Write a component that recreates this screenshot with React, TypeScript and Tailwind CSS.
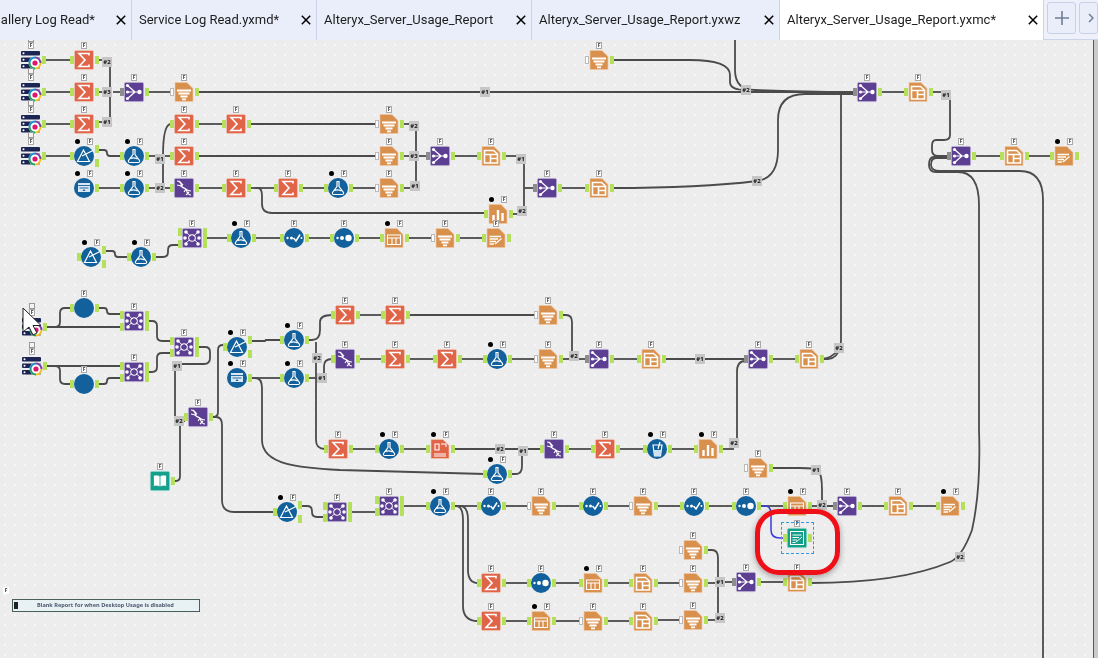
import React from "react";

type T = "server"|"sum"|"union"|"join"|"dna"|"text"|"layout"|"table"|"chart"|"render"|"flask"|"filter"|"dial"|"dots"|"blank"|"input"|"cup"|"tool"|"teal"|"book";

const BLUE = "#12609c";
const OR = "#d9904c";

function Icon({ t }: { t: T }) {
  const w = { stroke: "#fff", fill: "none", strokeWidth: 1.4 } as const;
  const fileShape = <path d="M1 0.5H13L19 6.5V19.5H1Z" fill={t === "tool" ? "#df6448" : OR} stroke="#eec9a6" strokeWidth="0.7" />;
  const circle = <circle cx="10" cy="10" r="10" fill={BLUE} />;
  const square = (c: string, e: string) => <rect x="0.4" y="0.4" width="19.2" height="19.2" rx="1.5" fill={c} stroke={e} strokeWidth="0.8" />;
  switch (t) {
    case "server":
      return (<>
        <rect x="0" y="1" width="19" height="4.6" rx="1" fill="#1b2453" />
        <rect x="0" y="7.5" width="19" height="4.6" rx="1" fill="#1b2453" />
        <rect x="0" y="14" width="19" height="4.6" rx="1" fill="#1b2453" />
        <circle cx="2.5" cy="3.3" r="1" fill="#fff" /><circle cx="2.5" cy="9.8" r="1" fill="#fff" /><circle cx="2.5" cy="16.3" r="1" fill="#fff" />
        <circle cx="14" cy="13" r="6.5" fill="#fff" />
        <path d="M8.5 13A5.5 5.5 0 0 1 14 7.5" stroke="#1b8fc4" strokeWidth="2" fill="none" />
        <path d="M14 7.5A5.5 5.5 0 0 1 19.5 13" stroke="#7a3fa0" strokeWidth="2" fill="none" />
        <path d="M19.5 13A5.5 5.5 0 0 1 14 18.5" stroke="#f0c020" strokeWidth="2" fill="none" />
        <path d="M14 18.5A5.5 5.5 0 0 1 8.5 13" stroke="#20a060" strokeWidth="2" fill="none" />
        <circle cx="14" cy="13" r="2.6" fill="#e0156b" />
      </>);
    case "sum":
      return (<>{square("#df6448", "#efcabd")}<path d="M15 5.5V3.5H5L11 10L5 16.5H15V14.5" {...w} strokeWidth="1.6" /></>);
    case "union":
      return (<>{square("#5c3f92", "#b9aed4")}
        <path d="M3.5 3.5L11 10M3.5 10H15M3.5 16.5L11 10" {...w} strokeWidth="1.2" />
        <circle cx="3.5" cy="3.5" r="1.6" fill="#fff" /><circle cx="3.5" cy="10" r="1.6" fill="#fff" /><circle cx="3.5" cy="16.5" r="1.6" fill="#fff" /><circle cx="15.5" cy="10" r="2.2" fill="#fff" /></>);
    case "join":
      return (<>{square("#5c3f92", "#b9aed4")}
        <circle cx="10" cy="10" r="3.2" {...w} strokeWidth="1.2" />
        <path d="M4 4L17 16M16 4L3 16" {...w} strokeWidth="0.9" />
        <circle cx="10" cy="10" r="2.6" fill="#5c3f92" />
        <circle cx="4" cy="4" r="1.8" fill="#fff" /><circle cx="16" cy="4" r="1.8" fill="#fff" /><circle cx="3" cy="10" r="1.8" fill="#fff" /><circle cx="17" cy="10" r="1.8" fill="#fff" /><circle cx="4" cy="16" r="1.8" fill="#fff" /><circle cx="16" cy="16" r="1.8" fill="#fff" /></>);
    case "dna":
      return (<>{square("#5c3f92", "#b9aed4")}
        <path d="M3 3C9 3 6 10 10 10C14 10 11 17 17 17M3 7C9 7 11 13 17 13M5 3L8 6M9 6L7 9M12 11L10 14M15 14L12 17" {...w} strokeWidth="1.1" /></>);
    case "text":
      return (<>{fileShape}<path d="M3 8.5H17M4.5 11.5H15.5M6.5 14.5H13.5M8 17.3H12" {...w} strokeWidth="1.8" /></>);
    case "layout":
      return (<>{fileShape}<path d="M3.5 4.5H12.5L16.5 8V17H3.5ZM3.5 8.5H16.5M9.5 8.5V17M9.5 12.5H16.5" {...w} strokeWidth="1.6" /></>);
    case "table":
      return (<>{fileShape}<path d="M3.5 7H16.5V16.5H3.5ZM3.5 10H16.5M8 10V16.5M12 10V16.5" {...w} strokeWidth="1.1" /></>);
    case "chart":
      return (<>{fileShape}<path d="M5.5 17V11M10 17V6M14.5 17V9" {...w} strokeWidth="2.4" /></>);
    case "render":
      return (<>{fileShape}<path d="M3.5 8.5H15M3.5 11H12M3.5 13.5H10M3.5 16H8M9 16L15.5 10.5" {...w} strokeWidth="1.3" /></>);
    case "tool":
      return (<>{fileShape}<path d="M5 5H9V11H5ZM11 5H16V8M4 15H16M4 17H16" {...w} strokeWidth="1.1" /></>);
    case "flask":
      return (<>{circle}<path d="M8.5 3.5H11.5M9 3.5V8.5L4.5 14.5Q4 16.5 6 16.5H14Q16 16.5 15.5 14.5L11 8.5V3.5M6.5 12.5Q10 11 13.5 13" {...w} strokeWidth="1.2" /></>);
    case "filter":
      return (<>{circle}<path d="M9.5 4L3.5 15.5H15.5ZM8 10L19 4.5" {...w} strokeWidth="1.2" /></>);
    case "dial":
      return (<>{circle}<circle cx="3.5" cy="10" r="1.2" fill="#fff" /><circle cx="7.5" cy="10" r="1.5" fill="#fff" /><path d="M9.5 10L12 13L16 6.5" {...w} strokeWidth="1.5" /><circle cx="17.5" cy="10" r="1" fill="#fff" /></>);
    case "dots":
      return (<>{circle}<circle cx="3.5" cy="10" r="1.2" fill="#fff" /><circle cx="8" cy="10" r="2" fill="#fff" /><circle cx="14.5" cy="10" r="3.2" fill="#fff" /></>);
    case "blank":
      return circle;
    case "input":
      return (<>{circle}<path d="M4 5H16V14H4Z" fill="#dbe7f3" /><path d="M4 7.5H16M5.5 10H14.5" stroke={BLUE} strokeWidth="0.9" /><path d="M10 11L8.5 13H11.5Z" fill={BLUE} /></>);
    case "cup":
      return (<>{circle}<path d="M6 6L7.5 17H13.5L15 6ZM13 3L11 10" {...w} strokeWidth="1.2" /><path d="M6.7 11H14.3L13.5 17H7.5Z" fill="#cfe2f2" /></>);
    case "teal":
      return (<>{square("#12a08a", "#7fcfc2")}<rect x="3.5" y="3.5" width="13" height="13" fill="none" stroke="#fff" strokeWidth="1" /><path d="M5.5 7H14.5M5.5 9.5H12M5.5 12H10M5.5 14.5H8M8.5 14.5L15 9" {...w} strokeWidth="1" /></>);
    case "book":
      return (<>{square("#15a08c", "#8ad3c8")}<path d="M10 5C8 3.8 5.5 3.8 3.5 4.5V15.5C5.5 14.8 8 14.8 10 16C12 14.8 14.5 14.8 16.5 15.5V4.5C14.5 3.8 12 3.8 10 5ZM10 5V16" fill="#fff" stroke="#15a08c" strokeWidth="0.8" /></>);
  }
}

// node: type, centre x, centre y, has black dot
type N = [T, number, number, number?];
const nodes: N[] = [
  ["server",31,60],["sum",84,60],["server",31,92],["sum",84,92],["union",134,92],["text",184,92],
  ["server",31,124],["sum",84,124],["sum",184,124],["sum",236,124],["text",389,124],
  ["server",31,156],["filter",84,156,1],["flask",134,156,1],["sum",184,156],["text",389,156],["union",440,156],["layout",491,156],
  ["input",84,188,1],["flask",134,188,1],["dna",184,188],["sum",236,188],["sum",288,188],["flask",338,188,1],["text",389,188],["union",547,188],["layout",599,188],
  ["chart",498,214,1],["text",599,60],["union",867,92],["layout",918,92],["union",961,156],["layout",1014,156],["render",1064,156,1],
  ["filter",91,257,1],["flask",141,257,1],["join",192,238],["flask",241,238,1],["dial",294,238],["dots",344,238],["table",394,238,1],["text",445,238],["render",496,238],
  ["server",32,327],["blank",84,308],["join",134,321],["join",184,347],["filter",237,347,1],["flask",294,340,1],["sum",345,315],["sum",395,315],["text",548,315],
  ["server",32,366],["join",134,372],["blank",84,384],["input",237,378,1],["flask",294,378,1],["dna",345,359],["sum",395,359],["sum",447,359],["flask",497,359,1],["text",548,359],["union",599,359],["layout",651,359],["union",758,359],["layout",809,359],
  ["dna",198,417],["sum",338,449],["flask",389,449,1],["tool",440,449,1],["dna",554,449],["sum",605,449],["cup",657,449,1],["chart",708,449,1],["flask",497,474,1],["text",758,468],
  ["book",160,481],
  ["filter",287,512,1],["join",337,512],["join",389,506],["flask",440,506,1],["dial",491,506],["text",541,506],["dial",593,506],["text",643,506],["dial",694,506],["dots",746,506],["table",797,506,1],["union",847,506],["layout",898,506],["render",950,506,1],
  ["teal",797,538],["text",693,550],
  ["sum",491,583],["dots",541,583],["table",593,583,1],["layout",643,583],["text",693,583],["union",746,582],["layout",797,582],
  ["sum",491,621],["table",541,621,1],["text",593,621],["layout",643,621],["text",693,620],
];

const tags: [number, number, string][] = [
  [107,62,"#2"],[107,92,"#3"],[107,122,"#1"],[160,159,"#1"],[160,188,"#2"],[414,126,"#2"],[414,156,"#3"],[415,186,"#1"],[521,159,"#1"],[522,211,"#2"],[485,92,"#1"],[746,90,"#2"],[757,181,"#2"],[946,95,"#1"],
  [177,366,"#1"],[179,421,"#2"],[317,358,"#2"],[322,378,"#1"],[574,356,"#2"],[700,359,"#1"],[839,348,"#2"],[500,449,"#2"],[523,451,"#1"],[734,443,"#2"],[816,470,"#1"],[822,505,"#2"],[720,582,"#1"],[720,618,"#2"],[960,557,"#2"],
];

function s(x1: number, y1: number, x2: number, y2: number, mx?: number) {
  if (y1 === y2) return `M${x1} ${y1}H${x2}`;
  const m = mx ?? (x1 + x2) / 2;
  const d = y2 > y1 ? 1 : -1;
  const r = Math.min(5, Math.abs(y2 - y1) / 2);
  return `M${x1} ${y1}H${m - r}Q${m} ${y1} ${m} ${y1 + d * r}V${y2 - d * r}Q${m} ${y2} ${m + r} ${y2}H${x2}`;
}

const wires: string[] = [
  s(44,60,72,60),s(44,92,72,92),s(44,124,72,124),s(44,156,72,156),
  s(97,60,107,60),s(97,92,107,92),s(97,122,107,122),"M110 62V122",s(113,92,121,92),s(147,92,171,92),s(197,92,853,92),
  "M735 40V70Q735 90 755 90Q800 92 853 92","M612 60H690Q730 60 730 75V82Q730 90 746 90",
  "M853 94H805Q778 94 778 120V150Q778 178 757 181Q700 188 612 188",
  "M841 95V340Q841 347 838 350Q832 358 822 359",
  s(880,92,905,92),s(974,156,1001,156),s(1027,156,1051,156),s(771,359,796,359),
  "M931 92H946","M950 97V135Q950 140 944 140H936Q932 140 932 146V150Q932 156 938 156H948",
  "M948 157H934Q929 157 929 165Q929 172 936 172H958Q979 172 979 205V430Q981 490 972 530Q962 557 950 562Q900 583 810 583",
  "M948 158H936Q931 158 931 165Q931 171 940 171H1020Q1043 171 1043 200V658",
  s(97,150,121,156,107),
  s(147,156,160,156),s(147,188,160,188),"M163 160V188","M163 156Q163 124 171 124","M163 156H171","M163 188H171",
  s(197,124,223,124),s(249,124,376,124),s(197,156,376,156),s(97,188,121,188),s(197,188,223,188),s(249,188,275,188),s(301,188,325,188),s(351,188,376,188),
  "M255 188H258Q262 188 262 196V204Q262 213 272 213H485",
  s(402,124,414,124),s(402,156,427,156),s(402,188,415,188),"M416 126V186",s(453,156,478,156),s(504,156,521,156),
  s(511,214,522,214),"M524 160V210","M524 188H534",s(560,188,586,188),
  s(104,251,128,257,115),s(154,257,179,245,168),s(205,238,228,238),s(254,238,281,238),s(307,238,331,238),s(357,238,381,238),s(407,238,432,238),s(458,238,483,238),
  s(45,327,71,308,60),s(97,308,121,314,107),s(45,327,121,327),s(147,321,171,341,157),s(45,366,121,366),s(45,366,71,384,60),s(97,384,121,378,107),s(147,372,171,353,157),
  "M197 347H205Q210 347 210 352V358Q210 364 204 364H180","M175 368V420","M175 421H185","M173 481H176Q180 481 180 476V425",
  s(211,417,223,345,218),"M211 417H216Q222 417 222 425V500Q222 512 234 512H274",
  s(250,341,281,340),"M307 340H312Q320 340 320 330V322Q320 315 332 315","M316 342V440Q316 449 325 449",
  s(250,378,281,378),"M250 378H255Q262 378 262 388V440C262 465 300 468 340 470L485 474",
  s(307,378,322,378),"M324 378V366Q324 359 332 359",
  s(358,315,382,315),s(408,315,535,315),s(561,315,565,315),"M561 315H566Q572 315 572 322V356",
  s(358,359,382,359),s(408,359,434,359),s(460,359,485,359),s(510,359,535,359),s(561,359,586,359),s(612,359,638,359),s(664,359,745,359),
  "M822 359H828Q838 358 839 348",
  s(351,449,376,449),s(402,449,427,449),s(453,449,541,449),s(567,449,592,449),s(618,449,644,449),s(670,449,695,449),s(721,449,734,449),"M737 440V372Q737 361 745 361",
  "M510 474H516Q522 474 522 466V451",
  "M771 468H800Q816 468 818 470Q822 474 822 490V503","M822 506H834",
  s(300,506,324,517,312),s(350,512,376,512),s(402,506,427,506),s(453,506,478,506),s(504,506,528,506),s(554,506,580,506),s(606,506,630,506),s(656,506,681,506),s(707,506,733,506),s(759,506,784,506),s(810,506,834,506),s(860,506,885,506),s(911,506,937,506),
  "M453 506H460Q468 506 468 520V570Q468 583 478 583","M453 506H456Q463 506 463 520V606Q463 621 478 621",
  s(504,583,528,583),s(554,583,580,583),s(606,583,630,583),s(656,583,680,583),s(504,621,528,621),s(554,621,580,621),s(606,621,630,621),s(656,620,680,620),
  "M706 550H712Q718 550 718 558V618",s(706,583,720,583),s(706,620,720,620),s(723,582,733,582),s(759,582,784,582),
];

const TOP = 40;

function Node({ n }: { n: N }) {
  const [t, x, y, dot] = n;
  const multi = t === "join" ? [-6, 0, 6] : t === "filter" ? [-7, 7] : [0];
  const lefts = t === "join" ? [-6, 6] : t === "server" || t === "input" || t === "book" ? [] : [0];
  const whiteIn = t === "text";
  const darkIn = t === "union";
  return (
    <div className="absolute w-0 h-0" style={{ left: x, top: y - TOP }}>
      <svg viewBox="0 0 20 20" className="absolute left-[-10px] top-[-10px] w-5 h-5 overflow-visible"><Icon t={t} /></svg>
      {lefts.map((o) => (
        <span key={o} className={"absolute left-[-14px] h-2 w-1 " + (whiteIn ? "bg-white border border-[#bbbbbb]" : darkIn ? "bg-[#8d8d8d]" : "bg-[#b4e05c]")} style={{ top: o - 4 }} />
      ))}
      {multi.map((o) => (
        <span key={o} className="absolute left-[11px] h-2 w-1 bg-[#b4e05c]" style={{ top: o - 4 }} />
      ))}
      {dot ? <span className="absolute left-[-9px] top-[-17px] h-[5px] w-[5px] rounded-full bg-black" /> : null}
      <span className={"absolute top-[-18px] flex h-[7px] w-[6px] items-center justify-center bg-white text-[5px] leading-none font-bold text-[#333333] border-[0.5px] border-[#aaaaaa] " + (dot ? "left-[3px]" : "left-[-3px]")}>F</span>
      {t === "server" ? <span className="absolute left-[-3px] top-[-24px] h-[6px] w-[6px] border-[0.5px] border-[#999999] bg-[#f4f4f4]" /> : null}
    </div>
  );
}

function Tag({ x, y, l }: { x: number; y: number; l: string }) {
  return (
    <span className="absolute flex h-[10px] w-[10px] items-center justify-center bg-[#c6c6c6] text-[6px] leading-none font-bold text-[#111111]" style={{ left: x - 5, top: y - TOP - 5 }}>{l}</span>
  );
}

function Tab({ label, w, active, clip }: { label: string; w: string; active?: boolean; clip?: boolean }) {
  return (
    <div className={"relative flex h-10 shrink-0 items-center justify-between overflow-hidden border-r border-[#ccd4ea] pr-[4px] pl-[7px] " + w + " " + (active ? "bg-white" : "bg-[#e9eefa]")}>
      <span className={"whitespace-nowrap font-['Roboto',sans-serif] text-[13px] text-[#1c1c1c] " + (clip ? "ml-[-15px]" : "")}>{label}</span>
      <svg viewBox="0 0 10 10" className="mr-[1px] h-[10px] w-[10px] shrink-0"><path d="M0.8 0.8L9.2 9.2M9.2 0.8L0.8 9.2" stroke="#000" strokeWidth="1.5" /></svg>
    </div>
  );
}

export default function App() {
  return (
    <div className="flex h-[658px] w-[1098px] flex-col overflow-hidden bg-white blur-[0.35px] font-['Noto_Sans',sans-serif]">
      <div className="flex h-10 shrink-0 border-b border-[#ccd4ea] bg-[#eef1fa]">
        <Tab label="Gallery Log Read*" w="w-[132px]" clip />
        <Tab label="Service Log Read.yxmd*" w="w-[185px]" />
        <Tab label="Alteryx_Server_Usage_Report" w="w-[215px]" />
        <Tab label="Alteryx_Server_Usage_Report.yxwz" w="w-[248px]" />
        <Tab label="Alteryx_Server_Usage_Report.yxmc*" w="w-[264px]" active />
        <div className="ml-[3px] mt-[2px] flex h-[32px] w-[33px] items-center justify-center rounded-[3px] border border-[#c8d0e6] bg-[#e9eefa]">
          <svg viewBox="0 0 14 14" className="h-[14px] w-[14px]"><path d="M7 0V14M0 7H14" stroke="#6f7f97" strokeWidth="1.6" /></svg>
        </div>
        <div className="ml-[3px] mt-[2px] flex h-[32px] w-[20px] items-center rounded-[3px] border border-[#c8d0e6] bg-[#e9eefa] pl-[8px]">
          <svg viewBox="0 0 6 10" className="h-[10px] w-[6px]"><path d="M1 1L5 5L1 9" stroke="#6f7f97" strokeWidth="1.5" fill="none" /></svg>
        </div>
      </div>
      <div className="relative flex-1 overflow-hidden bg-[#c9cbcb]">
        <div className="absolute inset-y-0 left-0 w-[1094px] border-r border-[#4f5f5c] bg-[#ededed] bg-[radial-gradient(#f7f7f7_0.8px,transparent_1px)] bg-[length:10px_10px]" />
        <svg className="absolute left-0 top-[-40px] h-[658px] w-[1098px]" viewBox="0 0 1098 658" fill="none">
          {wires.map((d, i) => <path key={i} d={d} stroke="#4b4b4b" strokeWidth="1.8" />)}
          <path d="M761 506H765Q771 506 771 514V530Q771 538 780 538H784" stroke="#3a3ae0" strokeWidth="1.5" />
        </svg>
        {tags.map(([x, y, l], i) => <Tag key={i} x={x} y={y} l={l} />)}
        {nodes.map((n, i) => <Node key={i} n={n} />)}

        {/* selection around the new tool */}
        <div className="absolute left-[781px] top-[482px] h-[32px] w-[33px] border border-dashed border-[#2f9be8]" />
        {/* red annotation */}
        <div className="absolute left-[755px] top-[469px] h-[66px] w-[85px] rounded-[24px] border-[5px] border-[#ee0f18] shadow-[0_2px_6px_rgba(0,0,0,0.35)]" />

        {/* comment box */}
        <span className="absolute left-[3px] top-[547px] flex h-[7px] w-[6px] items-center justify-center bg-white text-[5px] font-bold leading-none text-[#333333]">F</span>
        <div className="absolute left-[12px] top-[559px] flex h-[13px] w-[188px] items-center border border-[#4b5f5a] bg-[#e8f1f4] pl-[1px]">
          <span className="h-[7px] w-[4px] bg-[#222222]" />
          <span className="ml-[19px] whitespace-nowrap text-[5.6px] font-bold text-[#4d5a70]">Blank Report for when Desktop Usage is disabled</span>
        </div>

        {/* mouse pointer */}
        <svg className="absolute left-[22px] top-[267px] h-[30px] w-[22px]" viewBox="0 0 22 30"><path d="M1 1V25L7 20L11 28L15 26L11 18.5H19Z" fill="#fff" stroke="#222" strokeWidth="1" /></svg>
      </div>
    </div>
  );
}
